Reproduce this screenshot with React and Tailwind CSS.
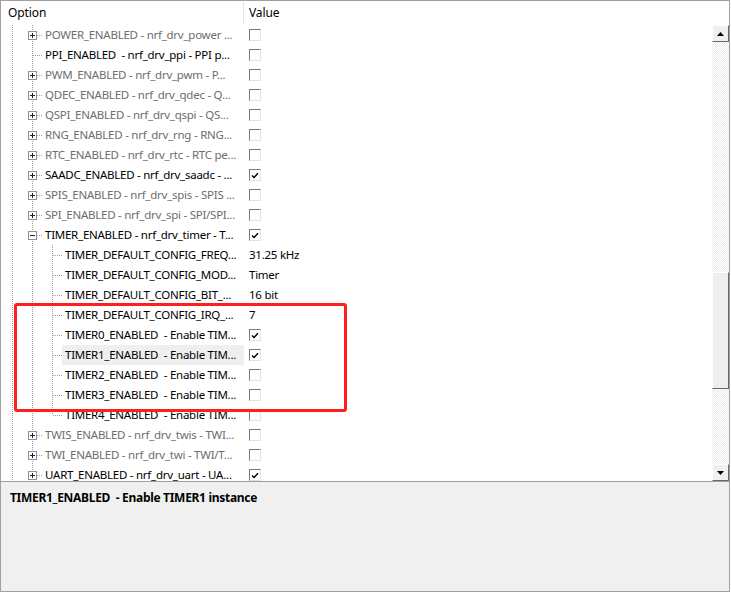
import React from "react";

const rows = [
  { t: "POWER_ENABLED - nrf_drv_power ...", lvl: 1, box: "plus", gray: true, v: "off" },
  { t: "PPI_ENABLED  - nrf_drv_ppi - PPI p...", lvl: 1, box: null, v: "off" },
  { t: "PWM_ENABLED - nrf_drv_pwm - P...", lvl: 1, box: "plus", gray: true, v: "off" },
  { t: "QDEC_ENABLED - nrf_drv_qdec - Q...", lvl: 1, box: "plus", gray: true, v: "off" },
  { t: "QSPI_ENABLED - nrf_drv_qspi - QS...", lvl: 1, box: "plus", gray: true, v: "off" },
  { t: "RNG_ENABLED - nrf_drv_rng - RNG...", lvl: 1, box: "plus", gray: true, v: "off" },
  { t: "RTC_ENABLED - nrf_drv_rtc - RTC pe...", lvl: 1, box: "plus", gray: true, v: "off" },
  { t: "SAADC_ENABLED - nrf_drv_saadc - ...", lvl: 1, box: "plus", v: "on" },
  { t: "SPIS_ENABLED - nrf_drv_spis - SPIS ...", lvl: 1, box: "plus", gray: true, v: "off" },
  { t: "SPI_ENABLED - nrf_drv_spi - SPI/SPI...", lvl: 1, box: "plus", gray: true, v: "off" },
  { t: "TIMER_ENABLED - nrf_drv_timer - T...", lvl: 1, box: "minus", v: "on" },
  { t: "TIMER_DEFAULT_CONFIG_FREQ...", lvl: 2, v: "31.25 kHz" },
  { t: "TIMER_DEFAULT_CONFIG_MOD...", lvl: 2, v: "Timer" },
  { t: "TIMER_DEFAULT_CONFIG_BIT_...", lvl: 2, v: "16 bit" },
  { t: "TIMER_DEFAULT_CONFIG_IRQ_...", lvl: 2, v: "7" },
  { t: "TIMER0_ENABLED  - Enable TIM...", lvl: 2, v: "on" },
  { t: "TIMER1_ENABLED  - Enable TIM...", lvl: 2, v: "on", sel: true },
  { t: "TIMER2_ENABLED  - Enable TIM...", lvl: 2, v: "off" },
  { t: "TIMER3_ENABLED  - Enable TIM...", lvl: 2, v: "off" },
  { t: "TIMER4_ENABLED  - Enable TIM...", lvl: 2, v: "off", last: true },
  { t: "TWIS_ENABLED - nrf_drv_twis - TWI...", lvl: 1, box: "plus", gray: true, v: "off" },
  { t: "TWI_ENABLED - nrf_drv_twi - TWI/T...", lvl: 1, box: "plus", gray: true, v: "off" },
  { t: "UART_ENABLED - nrf_drv_uart - UA...", lvl: 1, box: "plus", v: "on" },
];

const dot = { stroke: "#a0a0a0", strokeWidth: 1, strokeDasharray: "1 1", shapeRendering: "crispEdges" };

// tree guide lines drawn per row
const Guide = ({ r }) => {
  const w = r.lvl === 1 ? 41 : 61;
  return (
    <svg width={w} height="20" className="shrink-0">
      <line x1="11.5" y1="0" x2="11.5" y2="20" style={dot} />
      <line x1="31.5" y1="0" x2="31.5" y2="20" style={dot} />
      {r.lvl === 1 && !r.box && <line x1="32" y1="10.5" x2={w} y2="10.5" style={dot} />}
      {r.lvl === 1 && r.box && (
        <g>
          <line x1="36" y1="10.5" x2={w} y2="10.5" style={dot} />
          <rect x="27.5" y="6.5" width="8" height="8" fill="#fff" stroke="#919191" shapeRendering="crispEdges" />
          <line x1="29" y1="10.5" x2="34" y2="10.5" stroke="#1f1f1f" shapeRendering="crispEdges" />
          {r.box === "plus" && <line x1="31.5" y1="8" x2="31.5" y2="13" stroke="#1f1f1f" shapeRendering="crispEdges" />}
        </g>
      )}
      {r.lvl === 2 && (
        <g>
          <line x1="51.5" y1="0" x2="51.5" y2={r.last ? 10 : 20} style={dot} />
          <line x1="52" y1="10.5" x2={w} y2="10.5" style={dot} />
        </g>
      )}
    </svg>
  );
};

const Check = ({ on }) => (
  <div className="w-[12px] h-[12px] bg-white border-t border-l border-t-[#7a7a7a] border-l-[#7a7a7a] border-b border-r border-b-[#e3e3e3] border-r-[#e3e3e3] flex items-center justify-center">
    {on && (
      <svg width="8" height="7" viewBox="0 0 8 7">
        <path d="M1 3.5 L3 5.5 L7 1.2" fill="none" stroke="#000" strokeWidth="1.4" />
      </svg>
    )}
  </div>
);

const Row = ({ r }) => (
  <div className="flex items-center h-[20px] shrink-0">
    <div className="w-[243px] h-full flex items-center shrink-0 overflow-hidden">
      <Guide r={r} />
      <span
        className={`h-full flex-1 flex items-center pl-[3px] whitespace-pre ${r.sel ? "bg-[#efefef]" : ""} ${
          r.gray ? "text-[#6d6d6d]" : "text-black"
        }`}
      >
        {r.t}
      </span>
    </div>
    <div className="pl-[5px] flex items-center text-black">
      {r.v === "on" || r.v === "off" ? <Check on={r.v === "on"} /> : <span>{r.v}</span>}
    </div>
  </div>
);

const Btn = ({ up }) => (
  <div className="w-[17px] h-[17px] shrink-0 bg-[#f0f0f0] border-t border-l border-t-white border-l-white border-b border-r border-b-[#696969] border-r-[#696969] flex items-center justify-center">
    <svg width="7" height="4" viewBox="0 0 7 4">
      {up ? <path d="M3.5 0 L7 4 L0 4 Z" fill="#000" /> : <path d="M0 0 L7 0 L3.5 4 Z" fill="#000" />}
    </svg>
  </div>
);

export default function App() {
  return (
    <div className="w-[731px] h-[593px] bg-white relative text-[11.5px] tracking-[-0.25px] font-['Noto_Sans','Open_Sans',sans-serif]">
      <div className="w-[730px] h-[592px] border border-[#a0a0a0] flex flex-col">
        <div className="h-[24px] flex shrink-0 text-[12px] tracking-[-0.1px]">
          <div className="w-[243px] pl-[7px] flex items-center border-r border-[#e5e5e5] my-[1px]">Option</div>
          <div className="pl-[5px] flex items-center">Value</div>
        </div>
        <div className="h-[456px] flex shrink-0">
          <div className="flex-1 flex flex-col overflow-hidden">
            {rows.map((r, i) => (
              <Row key={i} r={r} />
            ))}
          </div>
          <div className="w-[17px] flex flex-col bg-[repeating-conic-gradient(#ffffff_0_25%,#ececec_0_50%)] bg-[length:2px_2px]">
            <Btn up />
            <div className="h-[230px] shrink-0" />
            <div className="h-[117px] shrink-0 bg-[#eeeeee] border-t border-l border-t-white border-l-white border-b border-r border-b-[#696969] border-r-[#696969]" />
            <div className="flex-1" />
            <Btn />
          </div>
        </div>
        <div className="flex-1 border-t border-[#a0a0a0] bg-[#f0f0f0] px-[9px] pt-[7px]">
          <div className="font-bold text-black text-[12px] tracking-[-0.3px] whitespace-pre">TIMER1_ENABLED  - Enable TIMER1 instance</div>
        </div>
      </div>
      <div className="absolute left-[14px] top-[303px] w-[333px] h-[109px] border-[3px] border-[#ff1f1f] rounded-[3px]" />
    </div>
  );
}
